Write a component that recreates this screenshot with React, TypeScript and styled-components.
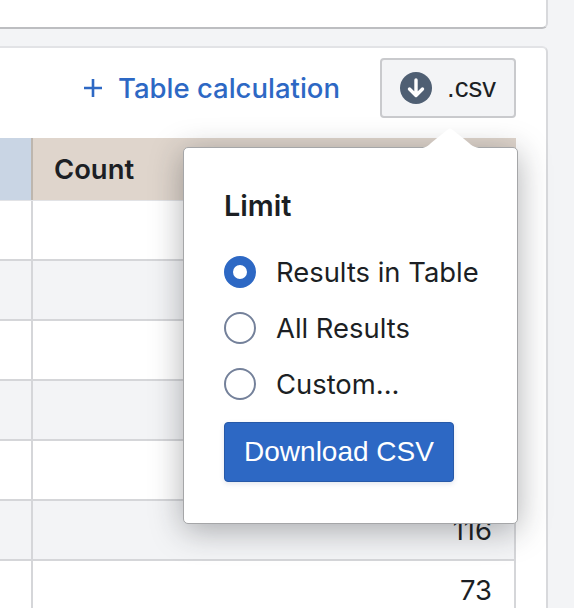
import React from 'react';
import styled, { createGlobalStyle } from 'styled-components';

const GlobalStyle = createGlobalStyle`
  html, body {
    margin: 0;
    padding: 0;
    height: 100%;
    overflow: hidden;
    background: #f3f4f6;
    font-family: Inter, "Liberation Sans", sans-serif;
    color: #1c1f24;
  }
`;

const Page = styled.div`
  width: 574px;
  height: 608px;
  overflow: hidden;
  display: flex;
  flex-direction: column;
  gap: 17px;
  padding-right: 26px;
  box-sizing: border-box;
`;

const TopCard = styled.div`
  flex: none;
  height: 29px;
  box-sizing: border-box;
  background: #fff;
  border-right: 2px solid #d8d9dc;
  border-bottom: 2px solid #bdbec1;
  border-bottom-right-radius: 6px;
`;

const MainCard = styled.div`
  flex: none;
  height: 600px;
  box-sizing: border-box;
  position: relative;
  background: #fff;
  border-top: 2px solid #e2e3e6;
  border-right: 2px solid #d8d9dc;
  border-top-right-radius: 6px;
`;

const Toolbar = styled.div`
  height: 90px;
  box-sizing: border-box;
  padding: 10px 30px 20px 0;
  display: flex;
  align-items: center;
  justify-content: flex-end;
  gap: 40px;
`;

const AddLink = styled.a`
  display: flex;
  align-items: center;
  gap: 15px;
  color: #2d68c4;
  font-size: 27.5px;
  font-weight: 500;
`;

const CsvButton = styled.button`
  width: 136px;
  height: 60px;
  box-sizing: border-box;
  display: flex;
  align-items: center;
  gap: 15px;
  padding: 0 0 0 18px;
  background: #f3f4f6;
  border: 2px solid #c9cacd;
  border-radius: 4px;
  font-family: "Liberation Sans", sans-serif;
  font-size: 27.5px;
  color: #1c1f24;
`;

const Table = styled.div`
  width: 516px;
  display: flex;
  flex-direction: column;
`;

const HeadRow = styled.div`
  display: grid;
  grid-template-columns: 33px 1fr;
  height: 63px;
  box-sizing: border-box;
  border-bottom: 1px solid #e2e3e6;
`;

const FirstHead = styled.div`
  background: #c9d5e4;
  border-right: 2px solid #bdb6ae;
`;

const CountHead = styled.div`
  background: #dfd5cc;
  padding-left: 21px;
  display: flex;
  align-items: center;
  font-size: 27.4px;
  font-weight: 600;
`;

const Row = styled.div<{ $shaded: boolean }>`
  display: grid;
  grid-template-columns: 33px 1fr;
  height: 60px;
  box-sizing: border-box;
  background: ${(props) => (props.$shaded ? '#f3f4f6' : '#fff')};
  border-bottom: 2px solid #d5d6d9;
  border-right: 2px solid #d5d6d9;
`;

const FirstCell = styled.div`
  border-right: 2px solid #d5d6d9;
`;

const CountCell = styled.div`
  display: flex;
  align-items: center;
  justify-content: flex-end;
  padding: 0 22px 0 0;
  font-size: 27.4px;
`;

const Popover = styled.div`
  position: absolute;
  left: 183px;
  top: 99px;
  width: 335px;
  height: 377px;
  box-sizing: border-box;
  padding: 42px 20px 0 40px;
  background: #fff;
  border: 1px solid #a5a6a8;
  border-radius: 5px;
  box-shadow: 0 6px 32px rgba(30, 34, 40, 0.36);
`;

const Arrow = styled.svg`
  position: absolute;
  left: 229px;
  top: -21px;
  display: block;
`;

const LimitTitle = styled.div`
  font-size: 28.8px;
  font-weight: 600;
  line-height: 32px;
  margin-bottom: 34px;
`;

const RadioList = styled.div`
  display: flex;
  flex-direction: column;
  gap: 24px;
  margin-bottom: 22px;
`;

const RadioRow = styled.label`
  display: flex;
  align-items: center;
  gap: 20px;
  height: 32px;
  font-size: 27.4px;
  white-space: nowrap;
`;

const RadioDot = styled.span<{ $on: boolean }>`
  flex: none;
  width: 32px;
  height: 32px;
  box-sizing: border-box;
  border-radius: 50%;
  background: #fff;
  border: ${(props) => (props.$on ? '9px solid #2d68c4' : '2px solid #74819a')};
`;

const DownloadButton = styled.button`
  display: block;
  width: 230px;
  height: 60px;
  padding: 0;
  background: #2d68c4;
  border: 1px solid #2759a8;
  border-radius: 4px;
  box-shadow: 0 2px 5px rgba(30, 60, 120, 0.12);
  color: #fff;
  font-family: "Liberation Sans", sans-serif;
  font-size: 28px;
`;

const PlusIcon = () => (
  <svg width="20" height="20" viewBox="0 0 20 20">
    <path d="M10 1v18M1 10h18" stroke="#2d68c4" strokeWidth="2.6" fill="none" />
  </svg>
);

const DownloadIcon = () => (
  <svg width="32" height="32" viewBox="0 0 32 32">
    <circle cx="16" cy="16" r="16" fill="#4f5f73" />
    <path d="M16 8v15M9.500 17l6.500 6.500 6.500-6.500" stroke="#fff" strokeWidth="3.400" strokeLinecap="round" strokeLinejoin="round" fill="none" />
  </svg>
);

const rows: { shaded: boolean; count: string }[] = [
  { shaded: false, count: '' },
  { shaded: true, count: '' },
  { shaded: false, count: '' },
  { shaded: true, count: '' },
  { shaded: false, count: '' },
  { shaded: true, count: '116' },
  { shaded: false, count: '73' },
];

const limits = [
  { label: 'Results in Table', on: true },
  { label: 'All Results', on: false },
  { label: 'Custom...', on: false },
];

export default function App() {
  return (
    <Page>
      <GlobalStyle />
      <TopCard />
      <MainCard>
        <Toolbar>
          <AddLink>
            <PlusIcon />
            Table calculation
          </AddLink>
          <CsvButton>
            <DownloadIcon />
            .csv
          </CsvButton>
        </Toolbar>
        <Table>
          <HeadRow>
            <FirstHead />
            <CountHead>Count</CountHead>
          </HeadRow>
          {rows.map((row, idx) => (
            <Row key={idx} $shaded={row.shaded}>
              <FirstCell />
              <CountCell>{row.count}</CountCell>
            </Row>
          ))}
        </Table>
        <Popover>
          <Arrow width="78" height="22" viewBox="0 0 78 22">
            <path d="M0 22C10 22 14 20 18 16L34 3Q37 0 40 3L56 16C60 20 66 22 78 22Z" fill="#fff" />
          </Arrow>
          <LimitTitle>Limit</LimitTitle>
          <RadioList>
            {limits.map((item) => (
              <RadioRow key={item.label}>
                <RadioDot $on={item.on} />
                {item.label}
              </RadioRow>
            ))}
          </RadioList>
          <DownloadButton>Download CSV</DownloadButton>
        </Popover>
      </MainCard>
    </Page>
  );
}
